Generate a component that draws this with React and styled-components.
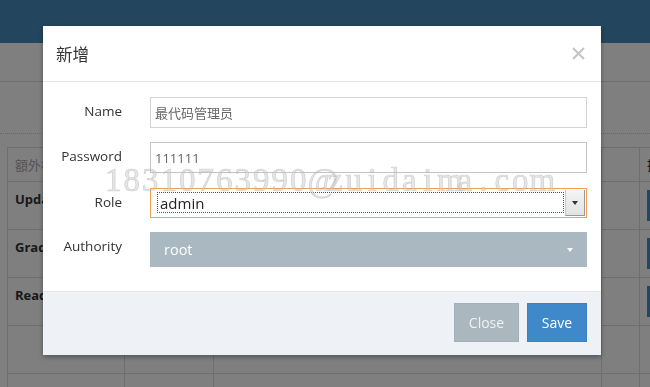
import React from "react";
import styled, { createGlobalStyle } from "styled-components";

const GlobalStyle = createGlobalStyle`
  html, body {
    margin: 0;
    padding: 0;
    width: 650px;
    height: 387px;
    overflow: hidden;
    background: #fff;
    font-family: "Open Sans", "Noto Sans CJK SC", sans-serif;
  }
  * { box-sizing: border-box; }
`;

/* ---------- background page ---------- */
const Page = styled.div`
  width: 650px;
  height: 387px;
  overflow: hidden;
  background: #fff;
`;

const TopBar = styled.div`
  height: 43px;
  background: #468cbc;
`;

const SubBar = styled.div`
  height: 39px;
  border-bottom: 1px solid #dcdcdc;
`;

const Toolbar = styled.div`
  height: 52px;
  border-bottom: 1px dotted #d0d0d0;
`;

const Table = styled.div`
  margin: 13px 0 0 7px;
  display: grid;
  grid-template-columns: 117px 89px 388px 38px 60px;
  grid-template-rows: 34px repeat(5, 48px);
  border-top: 1px solid #dcdcdc;
  border-left: 1px solid #dcdcdc;
`;

const Cell = styled.div`
  border-right: 1px solid #dcdcdc;
  border-bottom: 1px solid #dcdcdc;
  padding: ${(p) => (p.$head ? "0 7px" : "8px 7px 0")};
  display: flex;
  align-items: ${(p) => (p.$head ? "center" : "flex-start")};
  font-size: 13px;
  line-height: 18px;
  white-space: nowrap;
  overflow: hidden;
  color: ${(p) => p.$color || (p.$head ? "#aaa" : "#333")};
  font-weight: ${(p) => (p.$bold ? 700 : 400)};
  font-family: "Open Sans", "Noto Sans CJK TC", sans-serif;
`;

const RowButton = styled.div`
  width: 40px;
  height: 31px;
  background: #3e8ecc;
`;

const Overlay = styled.div`
  position: fixed;
  inset: 0;
  background: rgba(0, 0, 0, 0.5);
`;

/* ---------- modal ---------- */
const Modal = styled.div`
  position: fixed;
  top: 26px;
  left: 43px;
  width: 558px;
  background: #fff;
  box-shadow: 0 2px 5px rgba(0, 0, 0, 0.35);
`;

const Header = styled.div`
  height: 56px;
  border-bottom: 1px solid #e5e5e5;
  display: flex;
  align-items: center;
  justify-content: space-between;
  padding: 0 16px 0 13px;
`;

const Title = styled.h4`
  margin: 0;
  font-size: 16.5px;
  font-weight: 400;
  color: #333;
  font-family: "Noto Sans CJK SC", sans-serif;
  line-height: 24px;
`;

const CloseX = styled.svg`
  width: 13px;
  height: 13px;
  display: block;
`;

const Body = styled.div`
  padding: 15px 14px 24px 0;
  display: flex;
  flex-direction: column;
  gap: 14px;
`;

const Row = styled.div`
  display: flex;
  align-items: flex-start;
  margin-top: ${(p) => p.$extra || 0}px;
`;

const Label = styled.label`
  width: 79px;
  margin-right: 28px;
  text-align: right;
  font-size: 13.5px;
  line-height: 28px;
  color: #333;
`;

const TextInput = styled.div`
  flex: 1;
  height: 31px;
  border: 1px solid ${(p) => p.$border || "#d4d4d4"};
  padding: 0 4px;
  display: flex;
  align-items: center;
  font-size: 13px;
  color: #666;
  font-family: "Open Sans", "Noto Sans CJK SC", sans-serif;
`;

const SelectBox = styled.div`
  flex: 1;
  height: 30px;
  border: 1px solid #f5a050;
  display: flex;
  align-items: stretch;
  padding: 1px 1px 1px 6px;
`;

const FocusRing = styled.div`
  flex: 1;
  margin: 2px 1px 3px 0;
  border: 1px dotted #555;
  display: flex;
  align-items: center;
  padding-left: 2px;
  font-size: 15px;
  color: #222;
`;

const ArrowButton = styled.div`
  width: 20px;
  background: linear-gradient(#f4f4f4, #e2e2e2);
  border-left: 1px solid #c8c8c8;
  border-right: 1px solid #999;
  border-bottom: 1px solid #999;
  display: flex;
  align-items: center;
  justify-content: center;
`;

const DarkCaret = styled.span`
  width: 0;
  height: 0;
  border-left: 3.5px solid transparent;
  border-right: 3.5px solid transparent;
  border-top: 4px solid #333;
`;

const FilledSelect = styled.div`
  flex: 1;
  height: 35px;
  background: #aab8c2;
  display: flex;
  align-items: center;
  justify-content: space-between;
  padding: 0 14px 0 14px;
  font-size: 14.5px;
  color: #fff;
`;

const WhiteCaret = styled.span`
  width: 0;
  height: 0;
  border-left: 3.5px solid transparent;
  border-right: 3.5px solid transparent;
  border-top: 4px solid #fff;
`;

const Footer = styled.div`
  background: #eef1f6;
  border-top: 1px solid #e3e6ea;
  padding: 11px 14px 13px;
  display: flex;
  justify-content: flex-end;
  gap: 8px;
`;

const Button = styled.button`
  height: 39px;
  width: ${(p) => p.$w}px;
  border: 1px solid ${(p) => (p.$primary ? "#3a82c2" : "#a3b1ba")};
  background: ${(p) => (p.$primary ? "#3f89ca" : "#abb7bf")};
  color: ${(p) => (p.$primary ? "#fff" : "#eef2f5")};
  font-family: "Open Sans", sans-serif;
  font-size: 14px;
  padding: 0;
  border-radius: 0;
`;

/* ---------- watermark ---------- */
const Watermark = styled.div`
  position: fixed;
  top: 164px;
  left: 104px;
  display: flex;
  pointer-events: none;
  font-family: "Liberation Serif", serif;
  font-size: 33px;
  line-height: 33px;
  color: rgba(205, 205, 205, 0.5);
  -webkit-text-stroke: 0.7px rgba(160, 160, 160, 0.4);
`;

const WChar = styled.span`
  display: inline-block;
  width: 18.5px;
  text-align: center;
`;

const rows = [
  ["Update", true],
  ["Grade", true],
  ["Read", true],
  ["", false],
  ["", false],
];

export default function App() {
  const mark = "18310763990@zuidaima.com";
  return (
    <>
      <GlobalStyle />
      <Page>
        <TopBar />
        <SubBar />
        <Toolbar />
        <Table>
          <Cell $head>額外權限</Cell>
          <Cell $head />
          <Cell $head />
          <Cell $head />
          <Cell $head $color="#333">操作</Cell>
          {rows.map((r, i) => (
            <React.Fragment key={i}>
              <Cell $bold>{r[0]}</Cell>
              <Cell />
              <Cell />
              <Cell />
              <Cell>{r[1] && <RowButton />}</Cell>
            </React.Fragment>
          ))}
        </Table>
      </Page>
      <Overlay />
      <Modal>
        <Header>
          <Title>新增</Title>
          <CloseX viewBox="0 0 13 13">
            <path d="M1 1L12 12M12 1L1 12" stroke="#c4c4c4" strokeWidth="2" fill="none" />
          </CloseX>
        </Header>
        <Body>
          <Row>
            <Label>Name</Label>
            <TextInput>最代码管理员</TextInput>
          </Row>
          <Row>
            <Label>Password</Label>
            <TextInput $border="#c4c4c4">111111</TextInput>
          </Row>
          <Row $extra={1}>
            <Label>Role</Label>
            <SelectBox>
              <FocusRing>admin</FocusRing>
              <ArrowButton>
                <DarkCaret />
              </ArrowButton>
            </SelectBox>
          </Row>
          <Row>
            <Label>Authority</Label>
            <FilledSelect>
              root
              <WhiteCaret />
            </FilledSelect>
          </Row>
        </Body>
        <Footer>
          <Button $w={65}>Close</Button>
          <Button $w={60} $primary>Save</Button>
        </Footer>
      </Modal>
      <Watermark>
        {mark.split("").map((c, i) => (
          <WChar key={i}>{c}</WChar>
        ))}
      </Watermark>
    </>
  );
}
